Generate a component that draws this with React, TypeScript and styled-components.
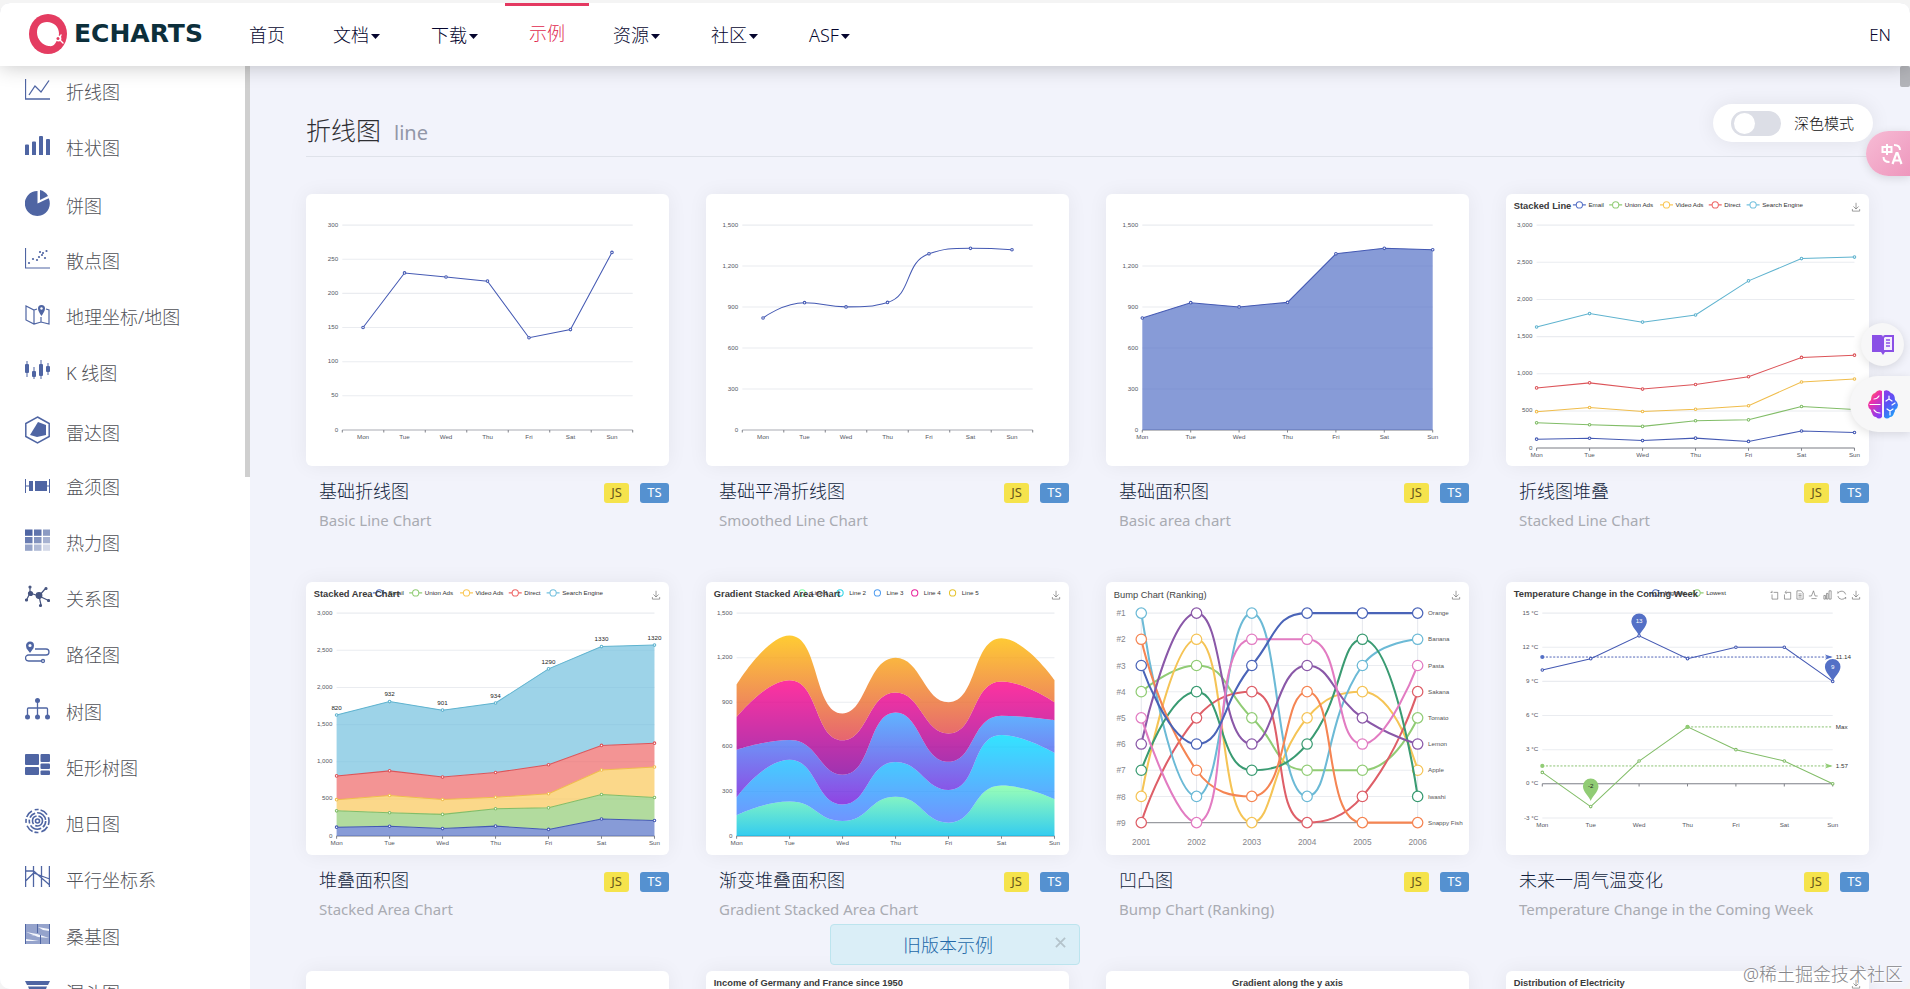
import React from 'react';
import styled, { createGlobalStyle } from 'styled-components';

const GlobalStyle = createGlobalStyle`
  *, *::before, *::after { box-sizing: border-box; }
  body {
    margin: 0;
    background: #f4f4f4;
    color: #293c55;
    font-family: 'Noto Sans', 'Noto Sans CJK SC', sans-serif;
    font-size: 16px;
    font-weight: 300;
    overflow: hidden;
  }
`;

/* ---------- page frame ---------- */

const Shell = styled.div`
  position: relative;
  display: flex;
  flex-direction: column;
  height: calc(100vh - 3px);
  margin-top: 3px;
  border-radius: 10px;
  overflow: hidden;
  background: #f2f3fb;
`;

const Header = styled.header`
  position: relative;
  z-index: 2;
  flex: none;
  display: flex;
  align-items: stretch;
  height: 63px;
  padding: 0 19px 0 29px;
  background: #fff;
  box-shadow: 0 0 20px rgba(0, 0, 0, 0.24);
`;

const Brand = styled.a`
  display: flex;
  align-items: center;
  gap: 7px;
  width: 196px;
  padding-bottom: 1px;
  color: #0c2f3b;
  font: 700 25px/40px 'DejaVu Sans', sans-serif;
  text-decoration: none;
`;

const Nav = styled.nav`
  display: flex;
  flex: 1;
`;

const NavLink = styled.a<{ $active?: boolean }>`
  display: flex;
  align-items: center;
  gap: 2px;
  padding: ${(p) => (p.$active ? '0 24px 7px' : '0 24px')};
  border-top: ${(p) => (p.$active ? '3px solid #e43961' : 'none')};
  color: ${(p) => (p.$active ? '#e01f4d' : '#05052e')};
  font-size: 18px;
  line-height: 24px;
  text-decoration: none;
`;

const Caret = styled.span`
  width: 9px;
  height: 5px;
  margin: 4px 3px 0 0;
  background: currentColor;
  clip-path: polygon(0 0, 100% 0, 50% 100%);
`;

const LangLink = styled.a`
  align-self: center;
  padding-bottom: 1px;
  color: #05052e;
  font-size: 17px;
  text-decoration: none;
`;

const Body = styled.div`
  flex: 1;
  display: flex;
  min-height: 0;
`;

/* ---------- sidebar ---------- */

const Sidebar = styled.aside`
  flex: none;
  display: flex;
  width: 250px;
  background: #fff;
  overflow: hidden;
`;

const Menu = styled.ul`
  flex: 1;
  margin: 0;
  padding: 0 0 0 25px;
  list-style: none;
`;

const MenuRow = styled.li<{ $height: number }>`
  display: flex;
  align-items: flex-end;
  height: ${(p) => p.$height}px;
`;

const MenuLink = styled.a`
  display: flex;
  align-items: center;
  gap: 16px;
  height: 30px;
  color: #505157;
  font-size: 18px;
  line-height: 24px;
  text-decoration: none;
  white-space: nowrap;

  svg { flex: none; margin-bottom: 6px; }
`;

const SideThumb = styled.div`
  width: 5px;
  height: 411px;
  background: #cfcfcf;
`;

/* ---------- gallery ---------- */

const Main = styled.main`
  position: relative;
  flex: 1;
  min-width: 0;
  padding: 38px 41px 0 56px;
  overflow: hidden;
`;

const SectionHead = styled.div`
  display: flex;
  align-items: center;
  justify-content: space-between;
  height: 53px;
  border-bottom: 1px solid #dfe2ea;
`;

const SectionTitle = styled.h2`
  display: flex;
  align-items: baseline;
  gap: 13px;
  margin: 0;
  padding-top: 2px;
  color: #2e2e32;
  font-size: 25px;
  font-weight: 300;
  line-height: 36px;

  small { color: #9297a8; font-size: 20px; font-weight: 400; }
`;

const DarkMode = styled.label`
  align-self: flex-start;
  display: flex;
  align-items: center;
  gap: 13px;
  height: 38px;
  margin-right: -4px;
  padding: 0 19px 0 18px;
  border-radius: 19px;
  background: #fff;
  box-shadow: 0 0 20px rgba(0, 0, 0, 0.08);
  color: #111;
  font-size: 15px;
  line-height: 20px;
`;

const Switch = styled.input`
  appearance: none;
  width: 50px;
  height: 25px;
  margin: 0;
  padding: 2px 3px;
  border-radius: 13px;
  background: #dcdee6;

  &::before {
    content: '';
    display: block;
    width: 21px;
    height: 21px;
    border-radius: 50%;
    background: #fff;
  }
  &:checked::before { margin-left: auto; }
`;

const Grid = styled.div`
  display: grid;
  grid-template-columns: repeat(4, minmax(0, 1fr));
  gap: 47px 37px;
  margin-top: 37px;
`;

const Card = styled.article`
  min-width: 0;
`;

const Thumb = styled.a`
  display: block;
  border-radius: 6px;
  background: #fff;
  box-shadow: 0 0 20px rgba(0, 0, 0, 0.06);
  overflow: hidden;

  svg { display: block; width: 100%; height: auto; }
`;

const Caption = styled.div`
  display: flex;
  align-items: center;
  gap: 11px;
  padding: 10px 0 0 13px;
`;

const CardTitle = styled.h4`
  flex: 1;
  margin: 0;
  color: #121f3d;
  font-size: 18px;
  font-weight: 300;
  line-height: 30px;
`;

const Badge = styled.a<{ $kind: 'js' | 'ts' }>`
  width: ${(p) => (p.$kind === 'js' ? '25px' : '29px')};
  height: 20px;
  margin-top: 4px;
  border-radius: 3px;
  background: ${(p) => (p.$kind === 'js' ? '#f5e34c' : '#5591d0')};
  color: ${(p) => (p.$kind === 'js' ? '#66571d' : '#fff')};
  font-size: 13px;
  font-weight: 400;
  line-height: 19px;
  text-align: center;
  text-decoration: none;
`;

const Subtitle = styled.p`
  margin: 0;
  padding-left: 13px;
  color: #a9abb2;
  font-size: 15px;
  font-weight: 400;
  line-height: 29px;
  white-space: nowrap;
`;

/* ---------- floating layers ---------- */

const PageThumb = styled.div`
  position: absolute;
  top: 63px;
  right: 0;
  width: 10px;
  height: 21px;
  border-radius: 2px;
  background: #b3b4b9;
`;

const OldVersion = styled.div`
  position: absolute;
  left: 50%;
  bottom: 24px;
  display: flex;
  align-items: center;
  width: 250px;
  height: 41px;
  margin-left: -125px;
  padding-left: 24px;
  border: 1px solid #bce4ee;
  border-radius: 4px;
  background: #daeef7;

  a {
    flex: 1;
    color: #2368a8;
    font-size: 18px;
    line-height: 24px;
    text-align: center;
    text-decoration: none;
  }
  button {
    width: 38px;
    height: 39px;
    padding: 0 0 3px;
    border: 0;
    background: none;
    color: #b4c3cb;
  }
`;

const Float = styled.button<{ $top: number; $kind: 'translate' | 'reader' | 'assistant' }>`
  position: absolute;
  top: ${(p) => p.$top}px;
  right: ${(p) => (p.$kind === 'reader' ? 6 : 0)}px;
  display: flex;
  align-items: center;
  padding: 0 0 0 ${(p) => ({ translate: 15, reader: 11, assistant: 18 })[p.$kind]}px;
  width: ${(p) => ({ translate: 44, reader: 43, assistant: 60 })[p.$kind]}px;
  height: ${(p) => ({ translate: 45, reader: 43, assistant: 56 })[p.$kind]}px;
  border: 0;
  border-radius: ${(p) => (p.$kind === 'reader' ? '50%' : '28px 0 0 28px')};
  background: ${(p) => (p.$kind === 'translate' ? 'linear-gradient(135deg, #f7bcd5, #ee97bd)' : '#f7f7f8')};
  box-shadow: 0 2px 10px rgba(0, 0, 0, 0.12);
`;

const Watermark = styled.div`
  position: absolute;
  right: 7px;
  bottom: 1px;
  color: #85858a;
  font-size: 18px;
  line-height: 28px;
  text-shadow: 0 0 2px #fff, 1px 1px 1px #fff;
`;

/* ---------- chart helpers ---------- */

type Pt = [number, number];
type Seg = [Pt, Pt, Pt];

const DAYS = ['Mon', 'Tue', 'Wed', 'Thu', 'Fri', 'Sat', 'Sun'];
const BLUE = '#5470c6';
const GREEN = '#91cc75';
const PALETTE = [BLUE, GREEN, '#fac858', '#ee6666', '#73c0de'];
const STROKES: Record<string, string> = {
  [BLUE]: '#4459b3',
  [GREEN]: '#82bd68',
  '#fac858': '#f0bd4c',
  '#ee6666': '#dc5459',
  '#73c0de': '#5fb3cf',
};
const GRID = '#eaecf0';

const clampTo = (v: number, a: number, b: number) => Math.max(Math.min(a, b), Math.min(Math.max(a, b), v));

function smoothSegments(pts: Pt[]): Seg[] {
  const segs: Seg[] = [];
  let c0: Pt = pts[0];
  for (let i = 1; i < pts.length; i++) {
    const prev = pts[i - 1];
    const p = pts[i];
    const next = pts[i + 1];
    if (!next) {
      segs.push([c0, p, p]);
      break;
    }
    const lenPrev = Math.hypot(p[0] - prev[0], p[1] - prev[1]);
    const lenNext = Math.hypot(next[0] - p[0], next[1] - p[1]);
    const ratio = lenNext / (lenNext + lenPrev);
    const c1: Pt = [0, 0];
    const nc: Pt = [0, 0];
    for (const k of [0, 1]) {
      const ahead = clampTo(p[k] + (next[k] - prev[k]) * 0.5 * ratio, p[k], next[k]);
      c1[k] = clampTo(p[k] - ((ahead - p[k]) * lenPrev) / lenNext, prev[k], p[k]);
      nc[k] = p[k] + ((p[k] - c1[k]) * lenNext) / lenPrev;
    }
    segs.push([c0, c1, p]);
    c0 = nc;
  }
  return segs;
}

const fmt = (p: Pt) => `${p[0].toFixed(1)},${p[1].toFixed(1)}`;
const straightSegments = (pts: Pt[]): Seg[] => pts.slice(1).map((p, i) => [pts[i], p, p]);
const curve = (segs: Seg[]) => segs.map((s) => `C${s.map(fmt).join(' ')}`).join('');
const linePath = (pts: Pt[], smooth = false) =>
  `M${fmt(pts[0])}${curve(smooth ? smoothSegments(pts) : straightSegments(pts))}`;

function areaPath(top: Pt[], base: Pt[], smooth = false) {
  const make = smooth ? smoothSegments : straightSegments;
  const b = make(base);
  const back: Seg[] = b.map((s, i): Seg => [s[1], s[0], base[i]]).reverse();
  return `M${fmt(top[0])}${curve(make(top))}L${fmt(base[base.length - 1])}${curve(back)}Z`;
}

const ChartSvg = styled.svg`
  font-family: 'Liberation Sans', Arial, sans-serif;
  font-size: 12px;
  font-weight: 400;
`;

interface Frame { l: number; r: number; t: number; b: number; min: number; max: number; band?: boolean }

const NARROW: Omit<Frame, 'min' | 'max'> = { l: 70, r: 630, t: 60, b: 455 };
const WIDE: Omit<Frame, 'min' | 'max'> = { l: 59, r: 672, t: 60, b: 490 };

const xAt = (f: Frame, i: number) =>
  f.band ? f.l + ((i + 0.5) * (f.r - f.l)) / 7 : f.l + (i * (f.r - f.l)) / 6;
const yAt = (f: Frame, v: number) => f.b - ((v - f.min) * (f.b - f.t)) / (f.max - f.min);
const toPts = (f: Frame, vals: number[]): Pt[] => vals.map((v, i) => [xAt(f, i), yAt(f, v)]);

function Axes({ f, step, unit = '' }: { f: Frame; step: number; unit?: string }) {
  const ticks: number[] = [];
  for (let v = f.min; v <= f.max; v += step) ticks.push(v);
  const zero = yAt(f, 0);
  return (
    <g>
      {ticks.map((v) => (
        <g key={v}>
          <line x1={f.l} x2={f.r} y1={yAt(f, v)} y2={yAt(f, v)} stroke={GRID} strokeWidth="2" />
          <text x={f.l - 8} y={yAt(f, v) + 3} textAnchor="end" fill="#55575f">
            {v.toLocaleString('en-US') + unit}
          </text>
        </g>
      ))}
      <line x1={f.l} x2={f.r} y1={zero} y2={zero} stroke={f.band ? '#b4b6bb' : '#83858c'} strokeWidth="2" />
      {Array.from({ length: f.band ? 8 : 7 }, (_, i) => {
        const x = f.band ? f.l + (i * (f.r - f.l)) / 7 : xAt(f, i);
        return <line key={i} x1={x} x2={x} y1={zero} y2={zero + 5} stroke="#83858c" strokeWidth="2" />;
      })}
      {DAYS.map((d, i) => (
        <text key={d} x={xAt(f, i)} y={f.b + 17} textAnchor="middle" fill="#55575f">{d}</text>
      ))}
    </g>
  );
}

function Series({ pts, color, smooth }: { pts: Pt[]; color: string; smooth?: boolean }) {
  return (
    <g fill="none" stroke={STROKES[color]} strokeWidth="2">
      <path d={linePath(pts, smooth)} />
      {pts.map((p, i) => <circle key={i} cx={p[0]} cy={p[1]} r="2.5" fill="#fff" />)}
    </g>
  );
}

interface LegendItem { x: number; label: string; color: string; bare?: boolean }

function Legend({ items }: { items: LegendItem[] }) {
  return (
    <g>
      {items.map((it) => (
        <g key={it.label}>
          {!it.bare && <line x1={it.x} x2={it.x + 25} y1="21" y2="21" stroke={it.color} strokeWidth="2" />}
          <circle cx={it.x + 12.5} cy="21" r="6" fill="#fff" stroke={it.color} strokeWidth="2" />
          <text x={it.x + 30} y="25" fill="#333">{it.label}</text>
        </g>
      ))}
    </g>
  );
}

const Title = ({ children, x = 15, anchor = 'start' }: { children: string; x?: number; anchor?: 'start' | 'middle' }) => (
  <text x={x} y="29" textAnchor={anchor} fontSize="18" fontWeight="700" fill="#3a3a3a">{children}</text>
);

const Download = () => (
  <path d="M675 17v12M670 24l5 5 5-5M668 29v4h14v-4" fill="none" stroke="#666" strokeWidth="1.2" />
);

function Chart({ label, children }: { label: string; children?: React.ReactNode }) {
  return <ChartSvg viewBox="0 0 700 525" role="img" aria-label={label}>{children}</ChartSvg>;
}

/* ---------- charts ---------- */

const EMAIL = [120, 132, 101, 134, 90, 230, 210];
const UNION = [220, 182, 191, 234, 290, 330, 310];
const VIDEO = [150, 232, 201, 154, 190, 330, 410];
const DIRECT = [320, 332, 301, 334, 390, 330, 320];
const SEARCH = [820, 932, 901, 934, 1290, 1330, 1320];

function stack(rows: number[][]) {
  const sum = rows[0].map(() => 0);
  return rows.map((r) => r.map((v, i) => (sum[i] += v)));
}

const TRAFFIC = stack([EMAIL, UNION, VIDEO, DIRECT, SEARCH]);
const TRAFFIC_LEGEND: LegendItem[] = [
  { x: 129, label: 'Email', color: PALETTE[0] },
  { x: 199, label: 'Union Ads', color: PALETTE[1] },
  { x: 297, label: 'Video Ads', color: PALETTE[2] },
  { x: 391, label: 'Direct', color: PALETTE[3] },
  { x: 464, label: 'Search Engine', color: PALETTE[4] },
];

function BasicLine() {
  const f: Frame = { ...NARROW, min: 0, max: 300, band: true };
  return (
    <Chart label="Basic Line Chart">
      <Axes f={f} step={50} />
      <Series pts={toPts(f, [150, 230, 224, 218, 135, 147, 260])} color={BLUE} />
    </Chart>
  );
}

function SmoothLine() {
  const f: Frame = { ...NARROW, min: 0, max: 1500, band: true };
  return (
    <Chart label="Smoothed Line Chart">
      <Axes f={f} step={300} />
      <Series pts={toPts(f, SEARCH)} color={BLUE} smooth />
    </Chart>
  );
}

function BasicArea() {
  const f: Frame = { ...NARROW, min: 0, max: 1500 };
  const pts = toPts(f, SEARCH);
  return (
    <Chart label="Basic area chart">
      <Axes f={f} step={300} />
      <path d={areaPath(pts, toPts(f, SEARCH.map(() => 0)))} fill={BLUE} opacity="0.7" />
      <Series pts={pts} color={BLUE} />
    </Chart>
  );
}

function StackedLine() {
  const f: Frame = { ...WIDE, min: 0, max: 3000 };
  return (
    <Chart label="Stacked Line Chart">
      <Axes f={f} step={500} />
      {TRAFFIC.map((row, i) => <Series key={i} pts={toPts(f, row)} color={PALETTE[i]} />)}
      <Legend items={TRAFFIC_LEGEND} />
      <Title>Stacked Line</Title>
      <Download />
    </Chart>
  );
}

function StackedArea() {
  const f: Frame = { ...WIDE, min: 0, max: 3000 };
  const rows = [EMAIL.map(() => 0), ...TRAFFIC].map((r) => toPts(f, r));
  return (
    <Chart label="Stacked Area Chart">
      <Axes f={f} step={500} />
      {PALETTE.map((c, i) => <path key={c} d={areaPath(rows[i + 1], rows[i])} fill={c} opacity="0.7" />)}
      {PALETTE.map((c, i) => <Series key={c} pts={rows[i + 1]} color={c} />)}
      {rows[5].map((p, i) => (
        <text key={i} x={p[0]} y={p[1] - 10} textAnchor="middle" fill="#222">{SEARCH[i]}</text>
      ))}
      <Legend items={TRAFFIC_LEGEND} />
      <Title>Stacked Area Chart</Title>
      <Download />
    </Chart>
  );
}

const GRADIENT_ROWS = stack([
  [140, 232, 101, 264, 90, 340, 250],
  [120, 282, 111, 234, 220, 340, 310],
  [320, 132, 201, 334, 190, 130, 220],
  [220, 402, 231, 134, 190, 230, 120],
  [220, 302, 181, 234, 210, 290, 150],
]);
const GRADIENTS = [
  ['#80ffa5', '#01bfec'],
  ['#00ddff', '#4d77ff'],
  ['#37a2ff', '#7415db'],
  ['#ff0087', '#87009d'],
  ['#ffbf00', '#e03e4c'],
];
const GRADIENT_LEGEND: LegendItem[] = GRADIENTS.map((g, i) => ({
  x: [173, 246, 318, 390, 463][i],
  label: `Line ${i + 1}`,
  color: ['#80ffa5', '#2bd3e6', '#4f9df0', '#e8209a', '#e6c32e'][i],
  bare: true,
}));

function GradientArea() {
  const f: Frame = { ...WIDE, min: 0, max: 1500 };
  const rows = [EMAIL.map(() => 0), ...GRADIENT_ROWS].map((r) => toPts(f, r));
  return (
    <Chart label="Gradient Stacked Area Chart">
      <defs>
        {GRADIENTS.map(([from, to], i) => (
          <linearGradient key={i} id={`layer-${i}`} x1="0" y1="0" x2="0" y2="1">
            <stop offset="0" stopColor={from} />
            <stop offset="1" stopColor={to} />
          </linearGradient>
        ))}
      </defs>
      <Axes f={f} step={300} />
      {GRADIENTS.map((_, i) => (
        <path key={i} d={areaPath(rows[i + 1], rows[i], true)} fill={`url(#layer-${i})`} opacity="0.8" />
      ))}
      <Legend items={GRADIENT_LEGEND} />
      <Title>Gradient Stacked Area Chart</Title>
      <Download />
    </Chart>
  );
}

const RANKS: { name: string; color: string; ranks: number[] }[] = [
  { name: 'Tomato', color: '#91cc75', ranks: [4, 3, 5, 7, 7, 5] },
  { name: 'Apple', color: '#f5c456', ranks: [8, 2, 9, 5, 4, 7] },
  { name: 'Sakana', color: '#de5f68', ranks: [9, 5, 4, 9, 8, 4] },
  { name: 'Banana', color: '#6cbad6', ranks: [1, 8, 1, 8, 3, 2] },
  { name: 'Iwashi', color: '#3a9b72', ranks: [7, 4, 7, 6, 2, 8] },
  { name: 'Snappy Fish', color: '#f58553', ranks: [2, 7, 8, 4, 9, 9] },
  { name: 'Lemon', color: '#8a58a8', ranks: [6, 1, 6, 3, 5, 6] },
  { name: 'Pasta', color: '#e27cc2', ranks: [5, 9, 2, 2, 6, 3] },
  { name: 'Orange', color: '#4a64b8', ranks: [3, 6, 3, 1, 1, 1] },
];

function BumpChart() {
  const x = (i: number) => 68 + i * 106.6;
  const y = (r: number) => 60 + (r - 1) * 50.5;
  return (
    <Chart label="Bump Chart (Ranking)">
      <text x="15" y="31" fontSize="18" fill="#464646">Bump Chart (Ranking)</text>
      <Download />
      {[1, 2, 3, 4, 5, 6, 7, 8, 9].map((r) => (
        <g key={r}>
          <line x1={x(0)} x2={x(5)} y1={y(r)} y2={y(r)} stroke={r === 9 ? '#9a9ca1' : GRID} strokeWidth="2" />
          <text x="38" y={y(r) + 6} textAnchor="end" fontSize="16" fill="#85858a">{`#${r}`}</text>
        </g>
      ))}
      {[0, 1, 2, 3, 4, 5].map((i) => (
        <g key={i}>
          <line x1={x(i)} x2={x(i)} y1={y(1)} y2={y(9)} stroke="#e6e8ee" strokeWidth="2" />
          <text x={x(i)} y="508" textAnchor="middle" fontSize="16" fill="#85858a">{2001 + i}</text>
        </g>
      ))}
      {RANKS.map((s) => {
        const pts = s.ranks.map((r, i): Pt => [x(i), y(r)]);
        return (
          <g key={s.name}>
            <path d={linePath(pts, true)} fill="none" stroke={s.color} strokeWidth="4" />
            {pts.map((p, i) => (
              <circle key={i} cx={p[0]} cy={p[1]} r="10" fill="#fff" stroke={s.color} strokeWidth="2.4" />
            ))}
            <text x={x(5) + 20} y={y(s.ranks[5]) + 4} fill="#555">{s.name}</text>
          </g>
        );
      })}
    </Chart>
  );
}

function Pin({ at, color, ink, children }: { at: Pt; color: string; ink: string; children: string }) {
  return (
    <g transform={`translate(${at[0]} ${at[1]})`}>
      <path d="M0 0C-3-8-15-17-15-28a15 15 0 1 1 30 0C15-17 3-8 0 0Z" fill={color} />
      <text y="-24" textAnchor="middle" fill={ink}>{children}</text>
    </g>
  );
}

function MarkLine({ x1, x2, y, color, label, arrow }: {
  x1: number; x2: number; y: number; color: string; label: string; arrow?: boolean;
}) {
  return (
    <g>
      <line x1={x1} x2={x2} y1={y} y2={y} stroke={STROKES[color]} strokeWidth="1.8" strokeDasharray="4 3" />
      <circle cx={x1} cy={y} r="4" fill={color} />
      {arrow && <path d={`M${x2} ${y}l-15-5 4 5-4 5z`} fill={color} />}
      <text x={x2 + 6} y={y + 4} fill="#333">{label}</text>
    </g>
  );
}

function Temperature() {
  const f: Frame = { ...NARROW, min: -3, max: 15 };
  const high = toPts(f, [10, 11, 13, 11, 12, 12, 9]);
  const low = toPts(f, [1, -2, 2, 5, 3, 2, 0]);
  return (
    <Chart label="Temperature Change in the Coming Week">
      <Axes f={f} step={3} unit=" °C" />
      <Series pts={high} color={BLUE} />
      <Series pts={low} color={GREEN} />
      <MarkLine x1={70} x2={630} y={yAt(f, 11.14)} color={BLUE} label="11.14" arrow />
      <MarkLine x1={70} x2={630} y={yAt(f, 1.57)} color={GREEN} label="1.57" arrow />
      <MarkLine x1={350} x2={630} y={yAt(f, 5)} color={GREEN} label="Max" />
      <Pin at={high[2]} color={BLUE} ink="#fff">13</Pin>
      <Pin at={high[6]} color={BLUE} ink="#fff">9</Pin>
      <Pin at={[xAt(f, 1), yAt(f, -1.5)]} color={GREEN} ink="#222">-2</Pin>
      <Legend items={[{ x: 276, label: 'Highest', color: BLUE }, { x: 356, label: 'Lowest', color: GREEN }]} />
      <Title>Temperature Change in the Coming Week</Title>
      <g fill="none" stroke="#666" strokeWidth="1.2">
        <path d="M513 17v4M510 20h3M516 20h8v13h-11v-9" />
        <path d="M537 24v9h12V20h-10M541 17l-3 3 3 3" />
        <path d="M561 17h8l4 4v12h-12zM564 23h6M564 26h6M564 29h6" />
        <path d="M584 27h5l4-10 3 10h5M589 32h10" />
        <path d="M613 33v-7h3v7zM618 33v-11h3v11zM623 33v-16h4v16z" />
        <path d="M655 24a8 8 0 0 0-15-2M640 27a8 8 0 0 0 15 2M655 29v4M640 18v4" />
      </g>
      <Download />
    </Chart>
  );
}

/* ---------- icons ---------- */

const INK = '#4f65a3';

const ICONS: Record<string, React.ReactNode> = {
  line: <path d="M.5 4v20H25M4 20l6-9 6 6L24 5.500" fill="none" stroke={INK} strokeWidth="1.3" />,
  bar: <path d="M0 14.500q0-1 1-1h2q1 0 1 1v9.500H0zM7 11.500q0-1 1-1h2q1 0 1 1V24H7zM14 6q0-1 1-1h2q1 0 1 1v18h-4zM21 9q0-1 1-1h2q1 0 1 1v15h-4z" fill={INK} />,
  pie: (
    <g fill={INK}>
      <path d="M12.500 2v12.500l11.200-5.200A12.500 12.500 0 1 1 12.500 2z" />
      <path d="M15 1a12.500 12.500 0 0 1 8 6l-8 4z" />
    </g>
  ),
  scatter: (
    <g fill={INK}>
      <path d="M.5 4v20H25" fill="none" stroke={INK} strokeWidth="1.200" />
      {[[4, 19], [8, 15], [12, 16], [14, 13], [15, 8], [17, 11], [20, 14], [18, 9], [21.500, 7]].map(([cx, cy]) => (
        <circle key={`${cx}-${cy}`} cx={cx} cy={cy} r="1.100" />
      ))}
    </g>
  ),
  map: (
    <g fill="none" stroke={INK} strokeWidth="1.200">
      <path d="M12 9l-3 1-8-4v14l8 4 7-2 8 2V10l-3-1M9 10v14M16 17v5" />
      <path d="M16.500 16c-1.500-2.500-3.500-5-3.500-7.500a3.500 3.500 0 0 1 7 0c0 2.500-2 5-3.500 7.500z" fill={INK} stroke="none" />
      <circle cx="16.500" cy="8.500" r="1.200" fill="#fff" stroke="none" />
    </g>
  ),
  candle: (
    <g fill={INK}>
      <path d="M1.500 5h1v16h-1zM8.500 11h1v12h-1zM15.500 4h1v19h-1zM22.500 7h1v12h-1z" />
      <rect x="0" y="8" width="4" height="9" rx="1" />
      <rect x="7" y="15" width="4" height="6" rx="1" />
      <rect x="14" y="8" width="4" height="12" rx="1" />
      <rect x="21" y="10" width="4" height="6" rx="1" />
    </g>
  ),
  radar: (
    <g>
      <path d="M12.500 1l11.700 6.500v13L12.500 27 .8 20.500v-13z" fill="none" stroke={INK} strokeWidth="1.500" />
      <path d="M13 6l8 3v10l-9 2-7-2z" fill={INK} />
    </g>
  ),
  boxplot: (
    <g fill={INK}>
      <path d="M0 9h1v14H0zM24 9h1v14h-1zM1 15.500h4v1H1zM21 15.500h4v1h-4z" />
      <path d="M4 11h4v10H4zM10 11h12v10H10z" />
    </g>
  ),
  heatmap: (
    <g fill={INK}>
      {[1, 0.9, 0.65, 0.85, 0.7, 0.5, 0.6, 0.45, 0.25].map((o, i) => (
        <rect key={i} x={(i % 3) * 9} y={3.500 + Math.floor(i / 3) * 7.500} width="7.500" height="6.300" opacity={o} />
      ))}
    </g>
  ),
  graph: (
    <g fill="#46547f" stroke="#46547f" strokeWidth="1.200">
      <path d="M5 6v5L1.500 18M5 11l9 3 6-7M14 14l9.500 4.500M14 14l2 9" fill="none" />
      <circle cx="5" cy="5" r="1" /><circle cx="5.500" cy="11.500" r="2" /><circle cx="1.500" cy="18" r="1" />
      <circle cx="14" cy="13.500" r="2.800" /><circle cx="21" cy="6.500" r="1" /><circle cx="23.500" cy="18.500" r="1" />
      <circle cx="15.500" cy="23.500" r="1" />
    </g>
  ),
  lines: (
    <g fill="none" stroke={INK} strokeWidth="1.300">
      <path d="M10 11h11a3 3 0 0 1 0 6H3.500a3 3 0 0 0 0 6H17" />
      <circle cx="18" cy="23" r="1.500" />
      <circle cx="5" cy="7.500" r="2.800" strokeWidth="2.400" />
      <path d="M2.500 10.500L5 14l2.500-3.500z" fill={INK} />
    </g>
  ),
  tree: (
    <g fill={INK}>
      <path d="M12.500 6v16M2.500 22v-8q0-1 1-1h18q1 0 1 1v8" fill="none" stroke={INK} strokeWidth="1.300" />
      <circle cx="12.500" cy="5.500" r="2.500" /><circle cx="2.500" cy="22" r="2.500" />
      <circle cx="12.500" cy="22" r="2.500" /><circle cx="22.500" cy="22" r="2.500" />
    </g>
  ),
  treemap: (
    <g fill={INK}>
      <rect x="0" y="3" width="14" height="11" rx="1" /><rect x="0" y="16" width="14" height="8" rx="1" />
      <rect x="15.500" y="3" width="9.500" height="8" rx="1" /><rect x="15.500" y="12.500" width="9.500" height="5.500" rx="1" />
      <rect x="15.500" y="19.500" width="9.500" height="4.500" rx="1" />
    </g>
  ),
  sunburst: (
    <g fill="none" stroke={INK} strokeWidth="1.600">
      <circle cx="12.500" cy="14" r="2" />
      <circle cx="12.500" cy="14" r="5" strokeDasharray="10 2" />
      <circle cx="12.500" cy="14" r="8.200" strokeDasharray="7 2 12 2 4 2" />
      <circle cx="12.500" cy="14" r="11.500" strokeDasharray="4 2 8 3" />
    </g>
  ),
  parallel: (
    <path d="M.6 3v21M8.500 3v21M16.500 3v21M24.400 3v21M.6 8h8l8 7 8 7M.6 18l8-8 8 3 8 3" fill="none" stroke={INK} strokeWidth="1.300" />
  ),
  sankey: (
    <g>
      <rect x="0" y="4" width="25" height="20" fill="#95a3cc" />
      <path d="M1 12l11 2 12 4-11-1zM13 7l11 2v2l-6-1zM1 19l13 2H1zM6 15l9 0 4 2z" fill="#f3f5fb" />
      <path d="M.5 4v20M24.500 4v20M12.500 4v9M15.500 15v9" stroke={INK} />
    </g>
  ),
  funnel: <path d="M0 5h25l-2 4H2zM3 10.500h19l-2 5H5zM6 17h13l-2 5H8z" fill={INK} />,
};

const MENU: [string, string, number][] = [
  ['line', '折线图', 41],
  ['bar', '柱状图', 56],
  ['pie', '饼图', 58],
  ['scatter', '散点图', 55],
  ['map', '地理坐标/地图', 56],
  ['candle', 'K 线图', 56],
  ['radar', '雷达图', 60],
  ['boxplot', '盒须图', 54],
  ['heatmap', '热力图', 56],
  ['graph', '关系图', 56],
  ['lines', '路径图', 56],
  ['tree', '树图', 57],
  ['treemap', '矩形树图', 56],
  ['sunburst', '旭日图', 56],
  ['parallel', '平行坐标系', 56],
  ['sankey', '桑基图', 57],
  ['funnel', '漏斗图', 56],
];

const NAV: { label: string; menu?: boolean; active?: boolean }[] = [
  { label: '首页' },
  { label: '文档', menu: true },
  { label: '下载', menu: true },
  { label: '示例', active: true },
  { label: '资源', menu: true },
  { label: '社区', menu: true },
  { label: 'ASF', menu: true },
];

const CARDS: { title: string; sub: string; chart: React.ReactNode }[] = [
  { title: '基础折线图', sub: 'Basic Line Chart', chart: <BasicLine /> },
  { title: '基础平滑折线图', sub: 'Smoothed Line Chart', chart: <SmoothLine /> },
  { title: '基础面积图', sub: 'Basic area chart', chart: <BasicArea /> },
  { title: '折线图堆叠', sub: 'Stacked Line Chart', chart: <StackedLine /> },
  { title: '堆叠面积图', sub: 'Stacked Area Chart', chart: <StackedArea /> },
  { title: '渐变堆叠面积图', sub: 'Gradient Stacked Area Chart', chart: <GradientArea /> },
  { title: '凹凸图', sub: 'Bump Chart (Ranking)', chart: <BumpChart /> },
  { title: '未来一周气温变化', sub: 'Temperature Change in the Coming Week', chart: <Temperature /> },
];

const NEXT_ROW: { name: string; chart: React.ReactNode }[] = [
  { name: 'Area Pieces', chart: null },
  {
    name: 'Income',
    chart: (
      <>
        <Title>Income of Germany and France since 1950</Title>
        <text x="50" y="43" fill="#6e7079">Income</text>
      </>
    ),
  },
  { name: 'Line Gradient', chart: <Title x={350} anchor="middle">Gradient along the y axis</Title> },
  { name: 'Electricity', chart: <><Title>Distribution of Electricity</Title><Download /></> },
];

const LogoMark = () => (
  <svg width="38" height="40" viewBox="0 0 38 40" aria-hidden="true">
    <ellipse cx="19" cy="20" rx="19" ry="20" fill="#e43c61" />
    <path d="M18 8c7 0 12 5 12 11.500 0 4.500-2 7-3.500 9.500-2 3-4 3.500-7 3-6-1-11.500-6.500-11.500-13.500C8 12 12 8 18 8z" fill="#fff" />
    <circle cx="29.500" cy="24.500" r="2.900" fill="#fff" />
    <circle cx="29" cy="24.500" r="1.500" fill="#e43c61" />
    <path d="M31 26l3 3M31 23.500l1-2.500" stroke="#fff" strokeWidth="1.400" strokeLinecap="round" />
  </svg>
);

const TranslateIcon = () => (
  <svg width="22" height="22" viewBox="0 0 22 22" fill="none" stroke="#fff" strokeWidth="2" aria-hidden="true">
    <path d="M1.500 4h9v5h-9zM6 1v11" />
    <path d="M13 2q6 0 6 5M2.500 14q0 5 6 5" />
    <path d="M11.500 21l4-11h1l4 11M13 17.500h6" strokeWidth="2.200" />
  </svg>
);

const BookIcon = () => (
  <svg width="22" height="20" viewBox="0 0 22 20" aria-hidden="true">
    <path d="M0 0h9q2 0 2 2 0-2 2-2h9v17h-9l-2 3-2-3H0z" fill="#8a50e6" />
    <path d="M13 2h7v13h-8V3z" fill="#f4eefd" />
    <path d="M14 5h4M14 8h4M14 11h4" stroke="#8a50e6" strokeWidth="1.400" />
  </svg>
);

const BrainIcon = () => (
  <svg width="30" height="29" viewBox="0 0 30 29" aria-hidden="true">
    <defs>
      <linearGradient id="brain-left" x1="0" y1="0" x2="0.600" y2="1">
        <stop offset="0" stopColor="#ffa02b" /><stop offset="0.400" stopColor="#f02fa6" /><stop offset="1" stopColor="#8a3df2" />
      </linearGradient>
      <linearGradient id="brain-right" x1="0" y1="0" x2="0.500" y2="1">
        <stop offset="0" stopColor="#8f3bea" /><stop offset="0.500" stopColor="#5a55f5" /><stop offset="1" stopColor="#1f9df8" />
      </linearGradient>
    </defs>
    <path d="M14 1v26q-3 3-6 0-3 0-4-4-1-1-1-3-3-2-3-5t3-5q0-6 4-7 3-4 7-2z" fill="url(#brain-left)" />
    <path d="M16 1v26q3 3 6 0 3 0 4-4 1-1 1-3 3-2 3-5t-3-5q0-6-4-7-3-4-7-2z" fill="url(#brain-right)" />
    <path d="M6 9q3 0 5-3M2 14.500h10M6 20q2 3 6 3M21 6v3l-3 2M21 9l3 2M19 19l3 2 3-2M22 21v4M27 13l-3 2" fill="none" stroke="#fff" strokeWidth="1.200" strokeLinecap="round" />
  </svg>
);

export default function App() {
  return (
    <>
      <GlobalStyle />
      <Shell>
        <Header>
          <Brand href="#"><LogoMark />ECHARTS</Brand>
          <Nav>
            {NAV.map((n) => (
              <NavLink key={n.label} href="#" $active={n.active}>
                {n.label}
                {n.menu && <Caret />}
              </NavLink>
            ))}
          </Nav>
          <LangLink href="#">EN</LangLink>
        </Header>

        <Body>
          <Sidebar>
            <Menu>
              {MENU.map(([icon, label, height]) => (
                <MenuRow key={icon} $height={height}>
                  <MenuLink href={`#${icon}`}>
                    <svg width="25" height="28" viewBox="0 0 25 28" aria-hidden="true">{ICONS[icon]}</svg>
                    {label}
                  </MenuLink>
                </MenuRow>
              ))}
            </Menu>
            <SideThumb />
          </Sidebar>

          <Main>
            <SectionHead>
              <SectionTitle>折线图<small>line</small></SectionTitle>
              <DarkMode><Switch type="checkbox" />深色模式</DarkMode>
            </SectionHead>
            <Grid>
              {CARDS.map((c) => (
                <Card key={c.sub}>
                  <Thumb href="#">{c.chart}</Thumb>
                  <Caption>
                    <CardTitle>{c.title}</CardTitle>
                    <Badge href="#" $kind="js">JS</Badge>
                    <Badge href="#" $kind="ts">TS</Badge>
                  </Caption>
                  <Subtitle>{c.sub}</Subtitle>
                </Card>
              ))}
              {NEXT_ROW.map((c) => (
                <Card key={c.name}>
                  <Thumb href="#"><Chart label={c.name}>{c.chart}</Chart></Thumb>
                </Card>
              ))}
            </Grid>
          </Main>
        </Body>

        <PageThumb />
        <OldVersion>
          <a href="#">旧版本示例</a>
          <button type="button" aria-label="关闭">
            <svg width="11" height="11" viewBox="0 0 12 12" aria-hidden="true">
              <path d="M1 1l10 10M11 1L1 11" stroke="currentColor" strokeWidth="2" />
            </svg>
          </button>
        </OldVersion>
        <Float type="button" $kind="translate" $top={128} aria-label="翻译"><TranslateIcon /></Float>
        <Float type="button" $kind="reader" $top={320} aria-label="阅读"><BookIcon /></Float>
        <Float type="button" $kind="assistant" $top={373} aria-label="助手"><BrainIcon /></Float>
        <Watermark>@稀土掘金技术社区</Watermark>
      </Shell>
    </>
  );
}
